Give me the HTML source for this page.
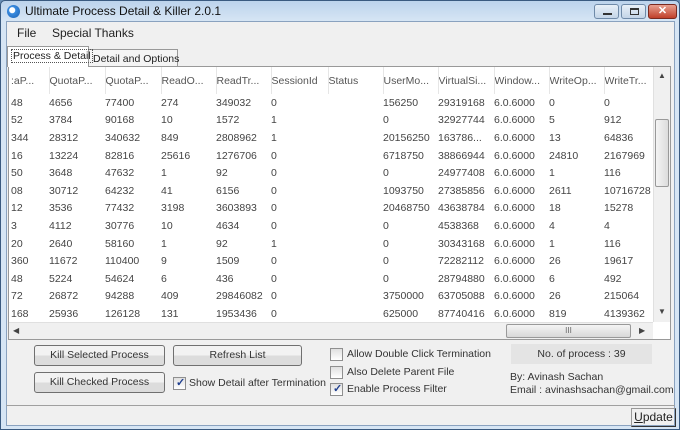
<!DOCTYPE html>
<html><head><meta charset="utf-8"><style>
*{margin:0;padding:0;box-sizing:border-box}
body{width:680px;height:430px;overflow:hidden;font-family:"Liberation Sans",sans-serif;font-size:11px;color:#222;background:#6a8fb5;position:relative;white-space:nowrap}
.win{position:absolute;left:0;top:0;width:680px;height:430px;background:linear-gradient(#bcd3ec,#d6e5f4 20px);border:1px solid #3a5a80;border-radius:5px 5px 0 0}
.body{position:absolute;left:5px;top:20px;width:669px;height:405px;background:#f0f0f0;border:1px solid #8aa2bf}
.title{position:absolute;left:24px;top:3px;font-size:12px;color:#111}
.ico{position:absolute;left:6px;top:4px;width:13px;height:13px;border-radius:50%;background:radial-gradient(circle at 40% 40%,#fff 0 25%,#3a8ce0 30%,#1b5fb0);}
.cb{position:absolute;top:3px;height:15px;border:1px solid #6f8aa8;border-radius:3px;background:linear-gradient(#e8f0f8,#c3d4e7)}
.abs{position:absolute}
.menu{position:absolute;top:25px;font-size:12px}
.tab{position:absolute;height:19px;border:1px solid #999;border-bottom:none;background:#f4f4f4;font-size:10.5px;padding:3px 4px;white-space:nowrap}
.panel{position:absolute;left:7px;top:65px;width:663px;height:274px;background:#fff;border:1px solid #999}
table{position:absolute;left:2px;top:0;border-collapse:collapse;table-layout:fixed;color:#444}
td{height:17.6px;white-space:nowrap;overflow:hidden;padding:0;font-size:10.5px}
tr.h td{height:27px;color:#555;border-right:1px solid #e6e6e6}
.btn{position:absolute;height:21px;border:1px solid #707070;border-radius:3px;background:linear-gradient(#f2f2f2 50%,#dcdcdc 50%);text-align:center;line-height:19px;font-size:10.5px;color:#333}
.chk{position:absolute;width:13px;height:13px;border:1px solid #8f8f8f;background:linear-gradient(#e0e0e0,#fff)}
.chk.on::after{content:"✓";position:absolute;left:2px;top:-2px;font-size:11px;color:#1f3f8f;font-weight:bold}
.lbl{position:absolute;font-size:10.5px;color:#333;white-space:nowrap}
</style></head><body>
<div class="win">
<div class="ico"></div>
<div class="title">Ultimate Process Detail &amp; Killer 2.0.1</div>
<div class="cb" style="left:593px;width:25px"><div class="abs" style="left:8px;top:8px;width:9px;height:2px;background:#333"></div></div>
<div class="cb" style="left:620px;width:25px"><div class="abs" style="left:8px;top:3px;width:9px;height:7px;border:1px solid #333;border-top-width:2px"></div></div>
<div class="cb" style="left:647px;width:29px;background:linear-gradient(#e8a090,#c0402a);border-color:#7a2a20;color:#fff;text-align:center;font-weight:bold;font-size:11px;line-height:13px">✕</div>
<div class="body">
<div class="menu" style="left:10px;top:4px">File</div>
<div class="menu" style="left:45px;top:4px">Special Thanks</div>
</div>
<div class="tab" style="left:87px;top:48px;width:90px">Detail and Options</div>
<div class="tab" style="left:6px;top:45px;width:82px;height:21px;background:#fff;z-index:2;padding:3px 3px"><span style="border:1px dotted #555;padding:0 1px">Process &amp; Detail</span></div>
<div class="panel">
<table style="top:0">
<colgroup><col style="width:38px"><col style="width:56px"><col style="width:56px"><col style="width:55px"><col style="width:55px"><col style="width:57px"><col style="width:55px"><col style="width:55px"><col style="width:56px"><col style="width:55px"><col style="width:55px"><col style="width:50px"></colgroup>
<tr class="h"><td>:aP...</td><td>QuotaP...</td><td>QuotaP...</td><td>ReadO...</td><td>ReadTr...</td><td>SessionId</td><td>Status</td><td>UserMo...</td><td>VirtualSi...</td><td>Window...</td><td>WriteOp...</td><td>WriteTr...</td></tr>
<tr><td>48</td><td>4656</td><td>77400</td><td>274</td><td>349032</td><td>0</td><td></td><td>156250</td><td>29319168</td><td>6.0.6000</td><td>0</td><td>0</td></tr>
<tr><td>52</td><td>3784</td><td>90168</td><td>10</td><td>1572</td><td>1</td><td></td><td>0</td><td>32927744</td><td>6.0.6000</td><td>5</td><td>912</td></tr>
<tr><td>344</td><td>28312</td><td>340632</td><td>849</td><td>2808962</td><td>1</td><td></td><td>20156250</td><td>163786...</td><td>6.0.6000</td><td>13</td><td>64836</td></tr>
<tr><td>16</td><td>13224</td><td>82816</td><td>25616</td><td>1276706</td><td>0</td><td></td><td>6718750</td><td>38866944</td><td>6.0.6000</td><td>24810</td><td>2167969</td></tr>
<tr><td>50</td><td>3648</td><td>47632</td><td>1</td><td>92</td><td>0</td><td></td><td>0</td><td>24977408</td><td>6.0.6000</td><td>1</td><td>116</td></tr>
<tr><td>08</td><td>30712</td><td>64232</td><td>41</td><td>6156</td><td>0</td><td></td><td>1093750</td><td>27385856</td><td>6.0.6000</td><td>2611</td><td>10716728</td></tr>
<tr><td>12</td><td>3536</td><td>77432</td><td>3198</td><td>3603893</td><td>0</td><td></td><td>20468750</td><td>43638784</td><td>6.0.6000</td><td>18</td><td>15278</td></tr>
<tr><td>3</td><td>4112</td><td>30776</td><td>10</td><td>4634</td><td>0</td><td></td><td>0</td><td>4538368</td><td>6.0.6000</td><td>4</td><td>4</td></tr>
<tr><td>20</td><td>2640</td><td>58160</td><td>1</td><td>92</td><td>1</td><td></td><td>0</td><td>30343168</td><td>6.0.6000</td><td>1</td><td>116</td></tr>
<tr><td>360</td><td>11672</td><td>110400</td><td>9</td><td>1509</td><td>0</td><td></td><td>0</td><td>72282112</td><td>6.0.6000</td><td>26</td><td>19617</td></tr>
<tr><td>48</td><td>5224</td><td>54624</td><td>6</td><td>436</td><td>0</td><td></td><td>0</td><td>28794880</td><td>6.0.6000</td><td>6</td><td>492</td></tr>
<tr><td>72</td><td>26872</td><td>94288</td><td>409</td><td>29846082</td><td>0</td><td></td><td>3750000</td><td>63705088</td><td>6.0.6000</td><td>26</td><td>215064</td></tr>
<tr><td>168</td><td>25936</td><td>126128</td><td>131</td><td>1953436</td><td>0</td><td></td><td>625000</td><td>87740416</td><td>6.0.6000</td><td>819</td><td>4139362</td></tr>
</table>
<div class="abs" style="left:644px;top:0;width:17px;height:255px;background:#f0f0f0;border-left:1px solid #e0e0e0">
<div class="abs" style="left:4px;top:4px;font-size:8px;color:#444">▲</div>
<div class="abs" style="left:1px;top:52px;width:14px;height:68px;border:1px solid #999;border-radius:2px;background:linear-gradient(90deg,#f4f4f4,#dcdcdc)"></div>
<div class="abs" style="left:4px;top:240px;font-size:8px;color:#444">▼</div>
</div>
<div class="abs" style="left:0;top:255px;width:644px;height:17px;background:#f0f0f0;border-top:1px solid #e0e0e0">
<div class="abs" style="left:4px;top:3px;font-size:8px;color:#444">◀</div>
<div class="abs" style="left:497px;top:1px;width:125px;height:14px;border:1px solid #999;border-radius:2px;background:linear-gradient(#f4f4f4,#d8d8d8);text-align:center;font-size:8px;line-height:12px;color:#666">III</div>
<div class="abs" style="left:630px;top:3px;font-size:8px;color:#444">▶</div>
</div>
</div>
<div class="btn" style="left:33px;top:344px;width:131px">Kill Selected Process</div>
<div class="btn" style="left:33px;top:371px;width:131px">Kill Checked Process</div>
<div class="btn" style="left:172px;top:344px;width:129px">Refresh List</div>
<div class="chk on" style="left:172px;top:376px"></div><div class="lbl" style="left:188px;top:376px">Show Detail after Termination</div>
<div class="chk" style="left:329px;top:347px"></div><div class="lbl" style="left:346px;top:347px">Allow Double Click Termination</div>
<div class="chk" style="left:329px;top:365px"></div><div class="lbl" style="left:346px;top:365px">Also Delete Parent File</div>
<div class="chk on" style="left:329px;top:382px"></div><div class="lbl" style="left:346px;top:382px">Enable Process Filter</div>
<div class="abs" style="left:510px;top:343px;width:141px;height:20px;background:#e4e4e4;text-align:center;line-height:20px;color:#333;font-size:10.5px">No. of process : 39</div>
<div class="lbl" style="left:509px;top:370px">By: Avinash Sachan</div>
<div class="lbl" style="left:509px;top:383px">Email : avinashsachan@gmail.com</div>
<div class="abs" style="left:5px;top:404px;width:669px;height:1px;background:#a0a0a0"></div>
<div class="abs" style="left:630px;top:407px;width:45px;height:19px;border:1px solid #999;border-right-color:#333;border-bottom-color:#333;font-size:12px;text-align:center;line-height:17px"><u>U</u>pdate</div>
</div>
</body></html>
